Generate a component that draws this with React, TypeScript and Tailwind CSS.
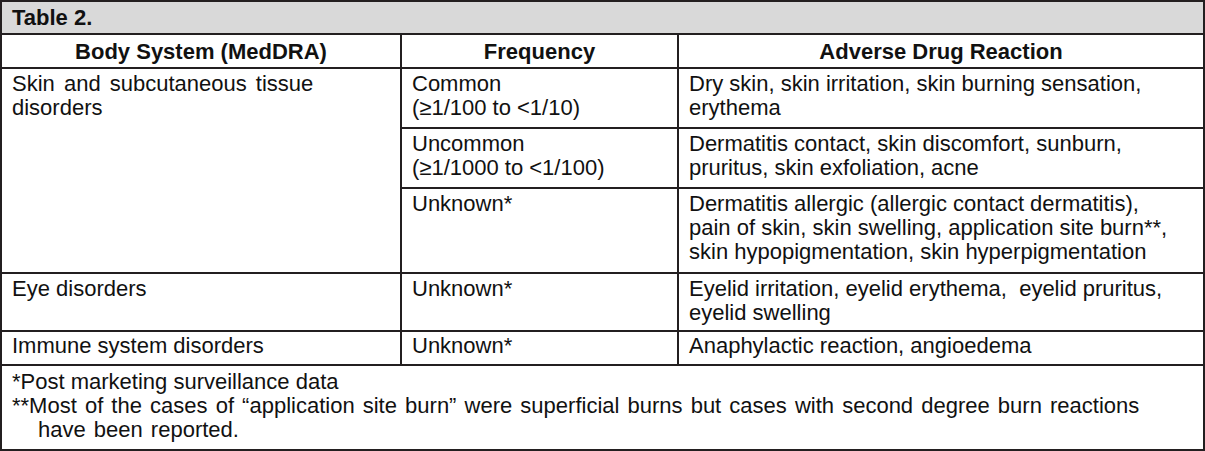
import React from 'react';

const line = 'border-2 border-[#231f20]';
const td = `${line} px-[10px] align-top text-left font-normal`;

const App: React.FC = () => {
  return (
    <div className="w-[1205px] h-[451px] bg-white text-[#111] font-['Liberation_Sans',Arial,sans-serif] text-[22px] leading-[24px]">
      <table className="w-full border-collapse table-fixed">
        <colgroup>
          <col className="w-[400px]" />
          <col className="w-[277px]" />
          <col />
        </colgroup>
        <tbody>
          <tr>
            <td colSpan={3} className={`${line} bg-[#d9d9d9] px-[10px] pt-[4px] pb-[3px] font-bold`}>
              Table 2.
            </td>
          </tr>
          <tr>
            <th className={`${line} pt-[5px] pb-[3px] font-bold text-center`}>Body System (MedDRA)</th>
            <th className={`${line} pt-[5px] pb-[3px] font-bold text-center`}>Frequency</th>
            <th className={`${line} pt-[5px] pb-[3px] font-bold text-center`}>Adverse Drug Reaction</th>
          </tr>
          <tr>
            <td rowSpan={3} className={`${td} pt-[3px] [word-spacing:3px]`}>
              Skin and subcutaneous tissue
              <br />
              disorders
            </td>
            <td className={`${td} pt-[3px] pb-[7px]`}>
              Common
              <br />
              (≥1/100 to &lt;1/10)
            </td>
            <td className={`${td} pt-[3px] pb-[7px]`}>
              Dry skin, skin irritation, skin burning sensation,
              <br />
              erythema
            </td>
          </tr>
          <tr>
            <td className={`${td} pt-[3px] pb-[7px]`}>
              Uncommon
              <br />
              (≥1/1000 to &lt;1/100)
            </td>
            <td className={`${td} pt-[3px] pb-[7px]`}>
              Dermatitis contact, skin discomfort, sunburn,
              <br />
              pruritus, skin exfoliation, acne
            </td>
          </tr>
          <tr>
            <td className={`${td} pt-[3px] pb-[8px]`}>Unknown*</td>
            <td className={`${td} pt-[3px] pb-[8px]`}>
              Dermatitis allergic (allergic contact dermatitis),
              <br />
              pain of skin, skin swelling, application site burn**,
              <br />
              skin hypopigmentation, skin hyperpigmentation
            </td>
          </tr>
          <tr>
            <td className={`${td} pt-[3px] pb-[5px]`}>Eye disorders</td>
            <td className={`${td} pt-[3px] pb-[5px]`}>Unknown*</td>
            <td className={`${td} pt-[3px] pb-[5px]`}>
              Eyelid irritation, eyelid erythema,&nbsp; eyelid pruritus,
              <br />
              eyelid swelling
            </td>
          </tr>
          <tr>
            <td className={`${td} pt-[2px] pb-[6px]`}>Immune system disorders</td>
            <td className={`${td} pt-[2px] pb-[6px]`}>Unknown*</td>
            <td className={`${td} pt-[2px] pb-[6px]`}>Anaphylactic reaction, angioedema</td>
          </tr>
          <tr>
            <td colSpan={3} className={`${td} pt-[4px] pb-[7px]`}>
              <p>*Post marketing surveillance data</p>
              <p className="pl-[26px] -indent-[26px] [word-spacing:2px]">
                **Most of the cases of “application site burn” were superficial burns but cases with second degree burn reactions
                <br />
                have been reported.
              </p>
            </td>
          </tr>
        </tbody>
      </table>
    </div>
  );
};

export default App;
